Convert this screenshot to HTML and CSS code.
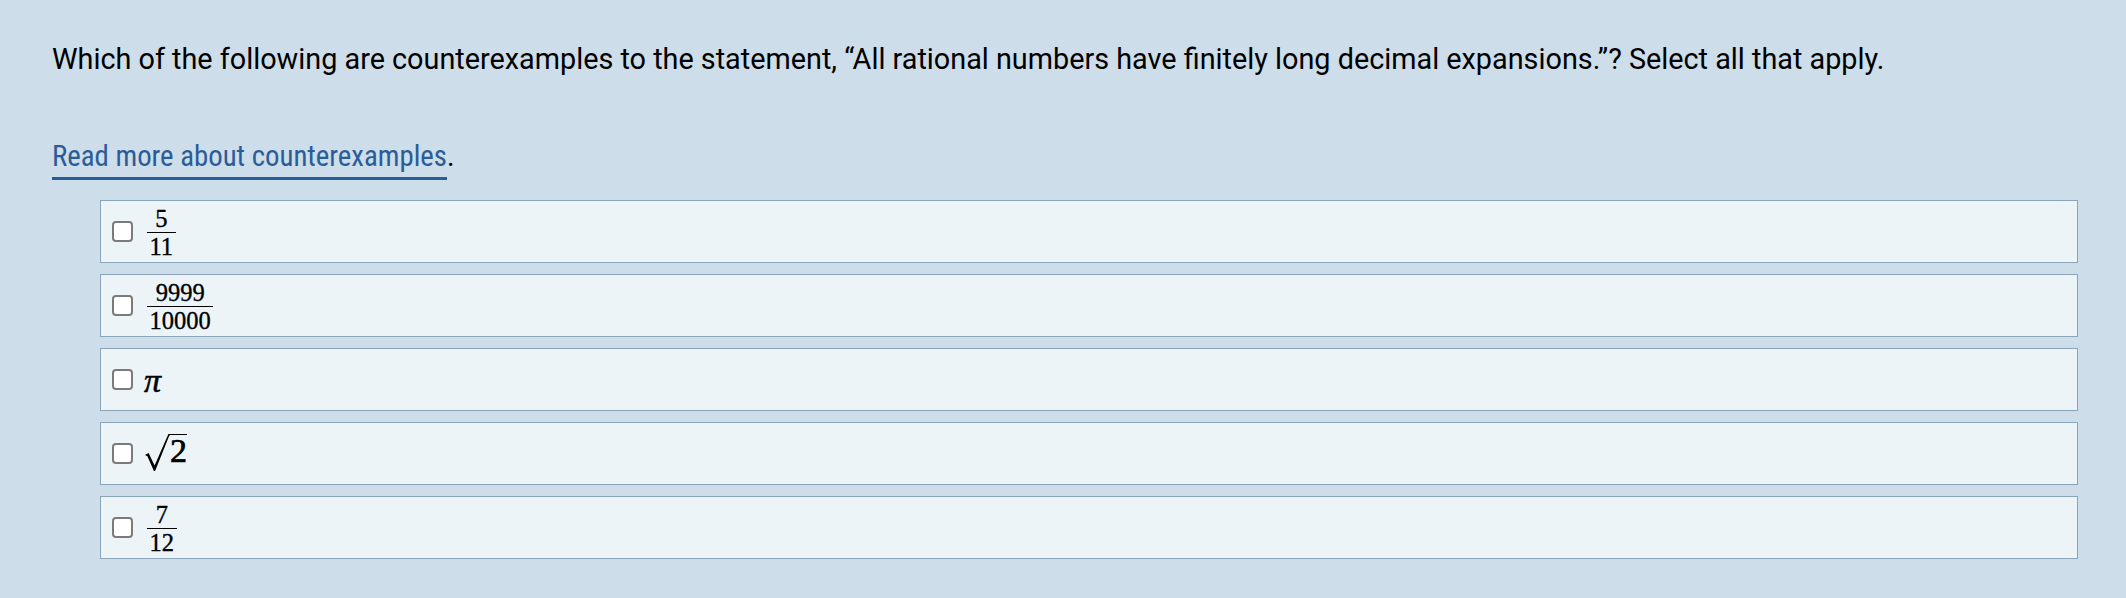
FILE: index.html
```html
<!DOCTYPE html>
<html lang="en">
<head>
<meta charset="utf-8">
<title>Counterexamples</title>
<link rel="stylesheet" href="styles.css">
</head>
<body>
<main class="page">
  <p class="question">Which of the following are counterexamples to the statement, “All rational numbers have finitely long decimal expansions.”? Select all that apply.</p>
  <p class="more"><a class="more-link" href="#">Read more about counterexamples</a>.</p>
  <ul class="options">
    <li class="option">
      <input type="checkbox" class="check">
      <span class="frac"><span class="num">5</span><span class="bar"></span><span class="den">11</span></span>
    </li>
    <li class="option">
      <input type="checkbox" class="check">
      <span class="frac"><span class="num">9999</span><span class="bar"></span><span class="den">10000</span></span>
    </li>
    <li class="option">
      <input type="checkbox" class="check">
      <span class="pi">π</span>
    </li>
    <li class="option">
      <input type="checkbox" class="check">
      <span class="sqrt">
        <svg class="radical" width="25" height="37" viewBox="0 0 25 37"><path d="M0 21 L3.6 19 L9.6 31.5 L23.4 0 L25 0 L25 1.6 L24.3 1.6 L10.1 37 L8.9 37 L2.4 22.2 Z" fill="#000"/></svg>
        <span class="radicand">2</span>
      </span>
    </li>
    <li class="option">
      <input type="checkbox" class="check">
      <span class="frac"><span class="num">7</span><span class="bar"></span><span class="den">12</span></span>
    </li>
  </ul>
</main>
</body>
</html>
```

FILE: styles.css
```css
html, body {
  margin: 0;
  padding: 0;
  background: #cddde9;
}

.page {
  padding: 39px 48px 0 52px;
  font-family: Roboto, "Liberation Sans", sans-serif;
  color: #000;
}

.question {
  margin: 0;
  font-size: 28.8px;
  line-height: 40px;
}

.more {
  margin: 60px 0 0 0;
  font-size: 28.8px;
  line-height: 34px;
}

.more-link {
  font-family: "Roboto Condensed", Roboto, "Liberation Sans Narrow", sans-serif;
  font-stretch: condensed;
  color: #2a5c98;
  text-decoration: none;
  padding-bottom: 4px;
  border-bottom: 3px solid #2a5c98;
}

.options {
  list-style: none;
  margin: 27px 0 0 48px;
  padding: 0;
  display: flex;
  flex-direction: column;
  gap: 11px;
}

.option {
  box-sizing: border-box;
  height: 63px;
  display: flex;
  align-items: center;
  padding-left: 11px;
  background: #ecf4f8;
  border: 1px solid #8aa5b9;
}

.check {
  appearance: none;
  -webkit-appearance: none;
  box-sizing: border-box;
  width: 21px;
  height: 21px;
  margin: 0 10px 0 0;
  border: 2px solid #7b7b7b;
  border-radius: 4px;
  background: #fff;
  flex: none;
}

.frac {
  display: inline-flex;
  flex-direction: column;
  align-items: stretch;
  margin-left: 4px;
  font-family: "Liberation Serif", "Times New Roman", serif;
  font-size: 24.5px;
  -webkit-text-stroke: 0.35px #000;
  text-align: center;
}

.num {
  padding: 1.5px 2.5px 3px;
  line-height: 21px;
}

.bar {
  height: 1.5px;
  background: #000;
}

.den {
  padding: 3px 2.5px 0;
  line-height: 21px;
}

.pi {
  font-family: "Liberation Serif", "Times New Roman", serif;
  font-style: italic;
  font-size: 34px;
  line-height: 30px;
  -webkit-text-stroke: 0.5px #000;
  margin-left: 1px;
  margin-top: 2px;
}

.sqrt {
  display: inline-flex;
  align-items: flex-start;
  margin-left: 2px;
  margin-bottom: 3px;
}

.radical {
  display: block;
  flex: none;
}

.radicand {
  font-family: "Liberation Serif", "Times New Roman", serif;
  font-size: 34px;
  line-height: 30px;
  -webkit-text-stroke: 0.7px #000;
  padding: 1.9px 0 0 0;
  border-top: 1.6px solid #000;
}
```
